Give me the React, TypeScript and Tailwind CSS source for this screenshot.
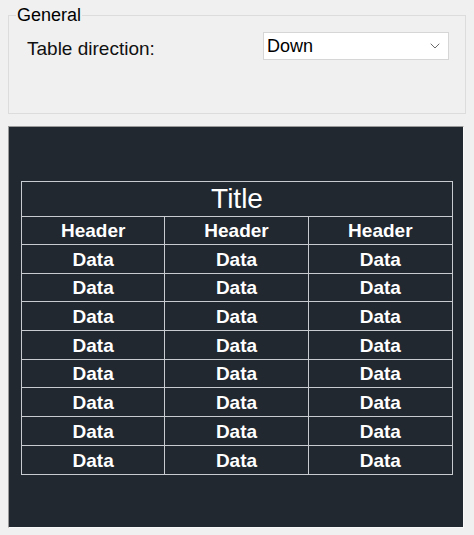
import { ChevronDown } from 'lucide-react';

const DATA_ROWS = ['h-[29px]', 'h-[28px]', 'h-[29px]', 'h-[29px]', 'h-[28px]', 'h-[29px]', 'h-[29px]', 'h-[28px]'];

function Cell({ children, last }: { children: string; last?: boolean }) {
  return (
    <div
      className={`flex items-center justify-center font-bold text-[19px] leading-none text-white ${
        last ? '' : 'border-r border-[#c8ccd0]'
      }`}
    >
      {children}
    </div>
  );
}

export default function App() {
  return (
    <div
      className="w-[474px] h-[535px] bg-[#f0f0f0] flex flex-col overflow-hidden"
      style={{ fontFamily: '"Liberation Sans", Arial, sans-serif' }}
    >
      {/* General group box */}
      <div className="relative mt-[15px] ml-[8px] mr-[8px] h-[99px] border border-[#dcdcdc]">
        <span className="absolute -top-[11px] left-[7px] bg-[#f0f0f0] px-px text-[18px] leading-[20px] text-black">
          General
        </span>
        <div className="flex items-center justify-between pl-[18px] pr-[16px] pt-[16px]">
          <span className="text-[19px] leading-none text-[#111] mt-[5px]">Table direction:</span>
          <div className="flex items-center justify-between w-[186px] h-[28px] bg-white border border-[#d6d6d6] pl-[3px] pr-[5px]">
            <span className="text-[18px] leading-none text-black">Down</span>
            <ChevronDown size={16} strokeWidth={1.4} className="text-[#606060]" />
          </div>
        </div>
      </div>

      {/* Preview panel */}
      <div className="mt-[12px] ml-[8px] mr-[10px] h-[402px] bg-[#222830] border-t border-l border-[#9a9a9a] border-r border-b border-r-[#f8f8f8] border-b-[#f8f8f8] pt-[54px] pl-[12px] pr-[10px]">
        <div className="border border-[#c8ccd0]">
          <div className="h-[35px] flex items-center justify-center text-white text-[28px] leading-none border-b border-[#c8ccd0]">
            Title
          </div>
          <div className="grid grid-cols-3 h-[28px] border-b border-[#c8ccd0]">
            <Cell>Header</Cell>
            <Cell>Header</Cell>
            <Cell last>Header</Cell>
          </div>
          {DATA_ROWS.map((h, i) => (
            <div
              key={i}
              className={`grid grid-cols-3 ${h} ${i < DATA_ROWS.length - 1 ? 'border-b border-[#c8ccd0]' : ''}`}
            >
              <Cell>Data</Cell>
              <Cell>Data</Cell>
              <Cell last>Data</Cell>
            </div>
          ))}
        </div>
      </div>
    </div>
  );
}
